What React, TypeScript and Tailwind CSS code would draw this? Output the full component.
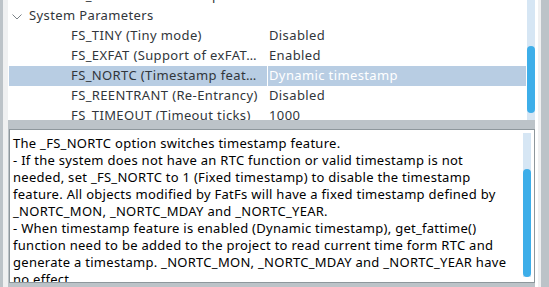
import React from "react";

const rows: { name: string; value: string; selected?: boolean }[] = [
  { name: "FS_TINY (Tiny mode)", value: "Disabled" },
  { name: "FS_EXFAT (Support of exFAT…", value: "Enabled" },
  { name: "FS_NORTC (Timestamp feat…", value: "Dynamic timestamp", selected: true },
  { name: "FS_REENTRANT (Re-Entrancy)", value: "Disabled" },
  { name: "FS_TIMEOUT (Timeout ticks)", value: "1000" },
];

const lines = [
  "The _FS_NORTC option switches timestamp feature.",
  "- If the system does not have an RTC function or valid timestamp is not",
  "needed, set _FS_NORTC to 1 (Fixed timestamp) to disable the timestamp",
  "feature. All objects modified by FatFs will have a fixed timestamp defined by",
  "_NORTC_MON, _NORTC_MDAY and _NORTC_YEAR.",
  "- When timestamp feature is enabled (Dynamic timestamp), get_fattime()",
  "function need to be added to the project to read current time form RTC and",
  "generate a timestamp. _NORTC_MON, _NORTC_MDAY and _NORTC_YEAR have",
  "no effect.",
];

export default function App() {
  return (
    <div className="w-[549px] h-[287px] flex overflow-hidden bg-[#bcc3c8] font-['Noto_Sans',sans-serif] text-[13px]">
      <div className="w-[3px] bg-[#bcc3c8]" />
      <div className="w-[5px] bg-[#eff0f1]" />
      <div className="w-[527px] flex flex-col">
        {/* Tree */}
        <div className="h-[120px] flex bg-white">
          <div className="w-[519px] overflow-hidden text-[#31363b] tracking-[0.38px]">
            <div className="-mt-[14px]">
              <div className="h-[20px] flex items-center pl-[63px] whitespace-nowrap">
                FS_LOCK Number of open files
              </div>
              <div className="h-[20px] flex items-center">
                <svg width="10" height="6" viewBox="0 0 10 6" className="ml-[4px] mt-[1px]">
                  <path d="M0.5 0.5 L5 5 L9.5 0.5" fill="none" stroke="#7b8287" strokeWidth="1" />
                </svg>
                <span className="ml-[7px] whitespace-nowrap">System Parameters</span>
              </div>
              {rows.map((r) => (
                <div key={r.name} className="h-[20px] flex pl-[1px]">
                  <div
                    className={
                      "w-[258px] flex items-center pl-[62px] pr-[2px] whitespace-nowrap overflow-hidden " +
                      (r.selected ? "bg-[#b8cde3]" : "")
                    }
                  >
                    {r.name}
                  </div>
                  <div
                    className={
                      "ml-[1px] w-[258px] flex items-center pl-[1px] whitespace-nowrap overflow-hidden " +
                      (r.selected ? "bg-[#b8cde3] text-white" : "")
                    }
                  >
                    {r.value}
                  </div>
                </div>
              ))}
            </div>
          </div>
          <div className="w-[8px] h-[120px] bg-[#d6e6f4] relative">
            <div className="absolute left-0 top-[46px] w-[8px] h-[67px] rounded-full bg-[#3daee9]" />
          </div>
        </div>
        {/* Splitter */}
        <div className="h-[9px] bg-[#bcc3c8]" />
        {/* Description panel */}
        <div className="ml-[1px] w-[526px] h-[154px] border border-[#8e979c] bg-white flex overflow-hidden">
          <div className="flex-1 pl-[3px] pt-[5px] text-black leading-[17px] tracking-[0.28px] overflow-hidden">
            {lines.map((l, i) => (
              <div key={i} className="whitespace-pre h-[17px]">
                {l}
              </div>
            ))}
          </div>
          <div className="mt-[3px] mr-[3px] w-[8px] h-[144px] bg-[#d6e6f4] relative">
            <div className="absolute left-0 top-[36px] w-[8px] h-[108px] rounded-full bg-[#3daee9]" />
          </div>
        </div>
        <div className="flex-1 bg-[#bcc3c8]" />
      </div>
      <div className="w-[3px] bg-white" />
      <div className="w-[3px] bg-[#eff0f1]" />
      <div className="flex-1 bg-[#bcc3c8]" />
    </div>
  );
}
